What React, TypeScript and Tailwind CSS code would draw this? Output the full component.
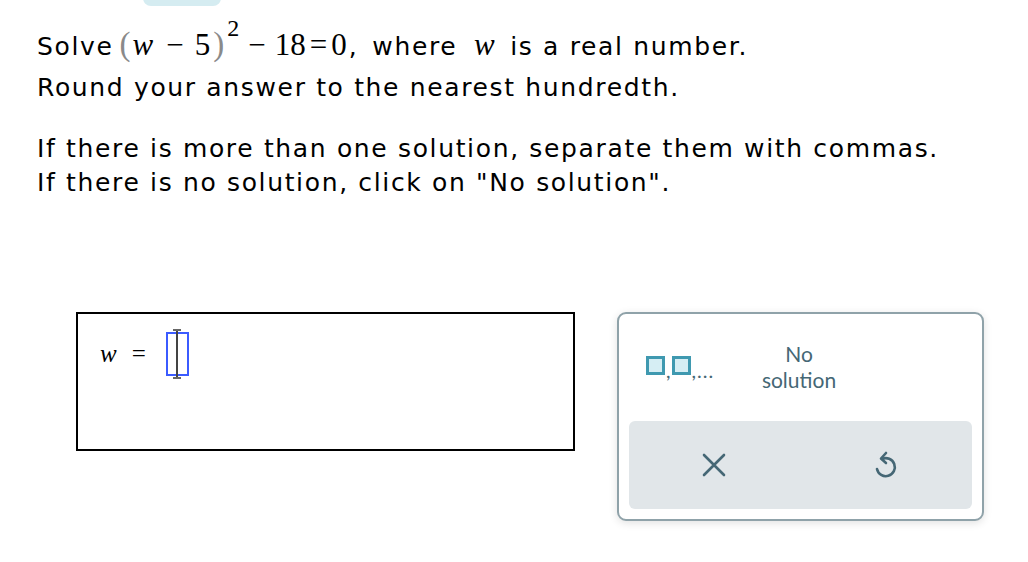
const App = () => {
  return (
    <div className="relative w-[1028px] h-[562px] bg-white overflow-hidden font-['DejaVu_Sans'] text-black">
      <div className="absolute left-[143px] top-[-10px] w-[78px] h-[16px] rounded-full bg-[#d5ecf1]" />

      <div className="pl-[37px] pt-[25px] text-[25px] leading-[38px] tracking-[1.65px]">
        <p className="flex items-baseline whitespace-pre">
          <span>Solve</span>
          <span className="font-['Liberation_Serif'] text-[31px] tracking-normal ml-[6px]">
            <span className="text-[#8a8a8a] text-[33px]">(</span>
            <i className="ml-[2px]">w</i>
            <span className="ml-[13px] mr-[11px]">−</span>
            <span>5</span>
            <span className="text-[#8a8a8a] text-[33px] ml-[3px]">)</span>
            <span className="text-[24px] relative top-[-19px] ml-[3px]">2</span>
            <span className="ml-[9px] mr-[9px]">−</span>
            <span>18</span>
            <span className="mx-[4px]">=</span>
            <span>0</span>
          </span>
          <span className="ml-[2px]">,</span>
          <span className="ml-[14px]">where </span>
          <i className="font-['Liberation_Serif'] text-[31px] tracking-normal ml-[7px] mr-[6px]">w</i>
          <span> is a real number.</span>
        </p>
        <p className="mt-[3px]">Round your answer to the nearest hundredth.</p>
        <p className="mt-[25px] leading-[34px]">If there is more than one solution, separate them with commas.</p>
        <p className="leading-[34px]">If there is no solution, click on "No solution".</p>
      </div>

      <div className="flex items-start gap-[42px] pl-[76px] mt-[112px]">
        <div className="w-[499px] h-[139px] border-2 border-black flex items-start pl-[22px] pt-[18px]">
          <span className="font-['Liberation_Serif'] text-[25px] flex items-center whitespace-pre">
            <i>w</i>
            <span className="ml-[15px]">=</span>
            <span className="relative ml-[20px] w-[23px] h-[44px] border-2 border-[#3b5bff]">
              <span className="absolute left-[8px] top-[-4px] w-[2px] h-[48px] bg-[#444]" />
              <span className="absolute left-[5px] top-[-5px] w-[8px] h-[2px] bg-[#666]" />
              <span className="absolute left-[5px] bottom-[-5px] w-[8px] h-[2px] bg-[#666]" />
            </span>
          </span>
        </div>

        <div className="w-[367px] h-[209px] rounded-[9px] border-2 border-[#8fa2a9] bg-white shadow-[0_2px_8px_rgba(0,0,0,0.12)] p-[10px] flex flex-col font-['Lato'] text-[#456775]">
          <div className="flex h-[97px] items-start pt-[17px]">
            <div className="w-[120px] flex items-end gap-[1px] pl-[17px] pt-[15px]">
              <span className="w-[19px] h-[19px] border-[3px] border-[#3f99b0] bg-[#d6eef4]" />
              <span className="text-[20px] leading-[10px]">,</span>
              <span className="w-[19px] h-[19px] border-[3px] border-[#3f99b0] bg-[#d6eef4]" />
              <span className="text-[20px] leading-[10px] tracking-[1px]">,...</span>
            </div>
            <div className="w-[100px] flex justify-center">
              <div className="text-center text-[21px] leading-[26px] whitespace-nowrap">
                No<br />solution
              </div>
            </div>
          </div>
          <div className="flex-1 rounded-[6px] bg-[#e1e6e9] flex items-center">
            <div className="w-[170px] flex justify-center">
              <svg width="24" height="24" viewBox="0 0 24 24" fill="none" stroke="#456775" strokeWidth="2.6" strokeLinecap="round">
                <path d="M2 2 L22 22 M22 2 L2 22" />
              </svg>
            </div>
            <div className="w-[173px] flex justify-center">
              <svg width="28" height="30" viewBox="0 0 28 30" fill="none" stroke="#456775" strokeWidth="2.6" strokeLinecap="round" strokeLinejoin="round">
                <path d="M10 9 A9 9 0 1 1 5 19" />
                <path d="M14 3 L9 8.5 L14 13" />
              </svg>
            </div>
          </div>
        </div>
      </div>
    </div>
  )
}

export default App
